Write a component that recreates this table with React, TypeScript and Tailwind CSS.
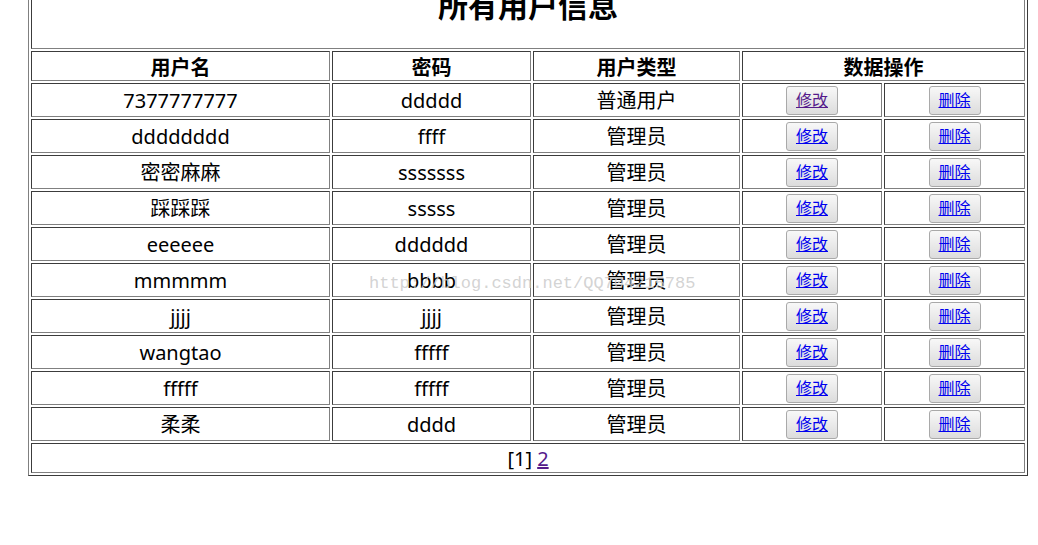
import React from "react";

interface UserRow {
  name: string;
  password: string;
  type: string;
}

const users: UserRow[] = [
  { name: "7377777777", password: "ddddd", type: "普通用户" },
  { name: "dddddddd", password: "ffff", type: "管理员" },
  { name: "密密麻麻", password: "sssssss", type: "管理员" },
  { name: "踩踩踩", password: "sssss", type: "管理员" },
  { name: "eeeeee", password: "dddddd", type: "管理员" },
  { name: "mmmmm", password: "bbbb", type: "管理员" },
  { name: "jjjj", password: "jjjj", type: "管理员" },
  { name: "wangtao", password: "fffff", type: "管理员" },
  { name: "fffff", password: "fffff", type: "管理员" },
  { name: "柔柔", password: "dddd", type: "管理员" },
];

// inset grey, like an old border="1" table cell
const cell =
  "p-0 border border-t-[#3c3c3c] border-l-[#3c3c3c] border-r-[#808080] border-b-[#808080] text-center";

function ActionButton({ label, visited }: { label: string; visited?: boolean }) {
  return (
    <button className="h-[29px] px-[9px] border border-[#a9a9a9] rounded-[3px] bg-gradient-to-b from-[#f8f8f8] to-[#dcdcdc] text-[16px] leading-none">
      <a
        href="#"
        className={`underline ${visited ? "text-[#551a8b]" : "text-[#0000ee]"}`}
      >
        {label}
      </a>
    </button>
  );
}

export default function App() {
  return (
    <div
      className="relative h-[545px] overflow-hidden bg-white text-black"
      style={{ fontFamily: '"Noto Sans", "Noto Sans CJK SC", sans-serif' }}
    >
      <table className="ml-[28px] mt-[-30px] w-[1000px] table-fixed border-separate border-spacing-[2px] border border-t-[#808080] border-l-[#808080] border-r-[#3c3c3c] border-b-[#3c3c3c] text-[20px]">
        <colgroup>
          <col className="w-[299px]" />
          <col className="w-[199px]" />
          <col className="w-[207px]" />
          <col className="w-[140px]" />
          <col className="w-[141px]" />
        </colgroup>
        <tbody>
          <tr>
            <td colSpan={5} className={cell}>
              <div className="h-[74px] pt-[16px]">
                <h2 className="text-[30px] font-bold leading-[32px]">所有用户信息</h2>
              </div>
            </td>
          </tr>
          <tr>
            <td className={cell}>
              <div className="h-[28px] leading-[31px] font-bold">用户名</div>
            </td>
            <td className={cell}>
              <div className="h-[28px] leading-[31px] font-bold">密码</div>
            </td>
            <td className={cell}>
              <div className="h-[28px] leading-[31px] font-bold">用户类型</div>
            </td>
            <td colSpan={2} className={cell}>
              <div className="h-[28px] leading-[31px] font-bold">数据操作</div>
            </td>
          </tr>
          {users.map((u, i) => (
            <tr key={i}>
              <td className={cell}>
                <div className="h-[32px] leading-[34px]">{u.name}</div>
              </td>
              <td className={cell}>
                <div className="h-[32px] leading-[34px]">{u.password}</div>
              </td>
              <td className={cell}>
                <div className="h-[32px] leading-[34px]">{u.type}</div>
              </td>
              <td className={cell}>
                <div className="h-[32px] flex items-center justify-center">
                  <ActionButton label="修改" visited={i === 0} />
                </div>
              </td>
              <td className={cell}>
                <div className="h-[32px] flex items-center justify-center">
                  <ActionButton label="删除" />
                </div>
              </td>
            </tr>
          ))}
          <tr>
            <td colSpan={5} className={cell}>
              <div className="h-[28px] leading-[30px]">
                [1]{" "}
                <a href="#" className="underline text-[#551a8b]">
                  2
                </a>
              </div>
            </td>
          </tr>
        </tbody>
      </table>

      {/* blog watermark over the table */}
      <div
        className="pointer-events-none absolute left-[369px] top-[272px] text-[17px] leading-[24px] text-[#c8c8c8]/80 whitespace-nowrap"
        style={{ fontFamily: '"Liberation Mono", monospace' }}
      >
        http://blog.csdn.net/QQ704215785
      </div>
    </div>
  );
}
